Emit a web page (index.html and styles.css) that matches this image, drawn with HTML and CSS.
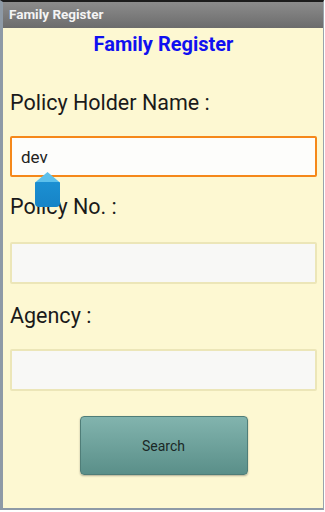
FILE: index.html
```html
<!DOCTYPE html>
<html lang="en">
<head>
    <meta charset="UTF-8">
    <meta name="viewport" content="width=device-width, initial-scale=1.0">
    <title>Family Register</title>
    <link rel="stylesheet" href="styles.css">
</head>
<body>
    <div class="phone">
        <div class="titlebar">Family Register</div>
        <div class="screen">
            <h2>Family Register</h2>

            <label for="holder" class="first">Policy Holder Name :</label>
            <div class="field-wrap">
                <input type="text" id="holder" class="focused" value="dev">
                <span class="handle"></span>
            </div>

            <label for="policy" class="second">Policy No. :</label>
            <input type="text" id="policy" class="tall">

            <label for="agency" class="third">Agency :</label>
            <input type="text" id="agency" class="tall">

            <div class="actions">
                <button type="button">Search</button>
            </div>
        </div>
    </div>
</body>
</html>
```

FILE: styles.css
```css
body {
    margin: 0;
    background: #ffffff;
    font-family: Roboto, "Liberation Sans", sans-serif;
}
.phone {
    width: 324px;
    height: 510px;
    border-top: 2px solid #1c1c1c;
    border-left: 3px solid #8e9aa6;
    border-right: 1px solid #9aa3ac;
    border-bottom: 2px solid #8e9aa6;
    background: #fdf8d2;
    box-sizing: border-box;
    display: flex;
    flex-direction: column;
}
.titlebar {
    height: 26px;
    line-height: 25px;
    padding-left: 6px;
    color: #f4f4f4;
    font-weight: bold;
    font-size: 13.5px;
    background: linear-gradient(#8c8c8c, #6c6c6c);
}
.screen {
    flex: 1;
    padding: 0 6px 0 7px;
}
h2 {
    margin: 4px 0 0;
    line-height: 24px;
    text-align: center;
    color: #1010f0;
    font-size: 20px;
    font-weight: bold;
}
label {
    display: block;
    font-size: 21.5px;
    color: #1a1a1a;
    line-height: 26px;
}
label.first {
    margin-top: 34px;
}
label.second {
    margin-top: 17px;
}
label.third {
    margin-top: 19px;
}
input {
    display: block;
    width: 100%;
    height: 42px;
    margin-top: 22px;
    box-sizing: border-box;
    border: 2px solid #ece6b8;
    border-radius: 2px;
    background: #f8f8f6;
    font-family: Roboto, "Liberation Sans", sans-serif;
    font-size: 17px;
    padding: 0 9px;
    color: #222;
}
#agency {
    margin-top: 20px;
}
.field-wrap {
    position: relative;
    margin-top: 20px;
}
input.focused {
    margin-top: 0;
    height: 41px;
    border: 2px solid #f5881a;
    background: #fdfdfb;
}
.handle {
    position: absolute;
    left: 25px;
    top: 36px;
    width: 25px;
    height: 35px;
    background: linear-gradient(#5cc0ec 0, #5cc0ec 30%, #1b8fd2 30%, #1784c6 100%);
    clip-path: polygon(50% 0, 100% 30%, 100% 100%, 0 100%, 0 30%);
    border-radius: 0 0 4px 4px;
}
.actions {
    display: flex;
    justify-content: center;
    margin-top: 25px;
}
button {
    width: 168px;
    height: 59px;
    border: 1px solid #4f7d78;
    border-radius: 4px;
    background: linear-gradient(#82b4ae, #5a8f89);
    color: #1a2826;
    font-family: Roboto, "Liberation Sans", sans-serif;
    font-size: 14px;
    box-shadow: 0 1px 2px rgba(0, 0, 0, 0.3);
}
```
